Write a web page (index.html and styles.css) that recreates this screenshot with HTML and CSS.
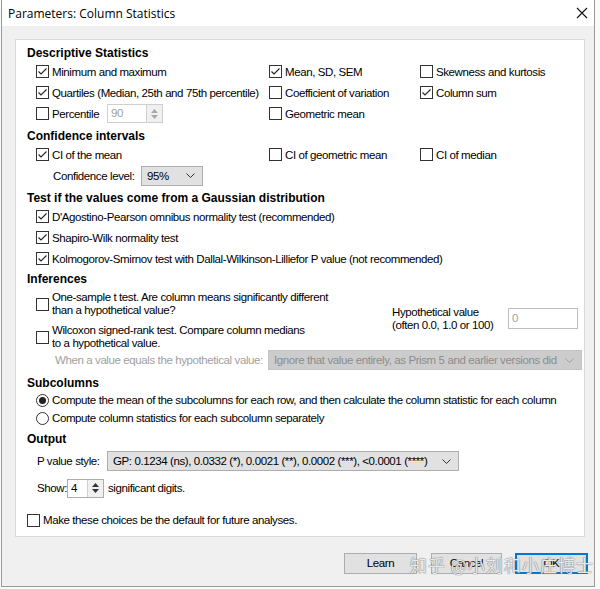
FILE: index.html
```html
<!DOCTYPE html>
<html lang="en">
<head>
    <meta charset="UTF-8">
    <title>Parameters: Column Statistics</title>
    <link rel="stylesheet" href="styles.css">
</head>
<body>
    <div class="win">
        <div class="titlebar">
            <span class="title">Parameters: Column Statistics</span>
            <svg class="close" width="12" height="12" viewBox="0 0 12 12"><path d="M1 1L11 11M11 1L1 11" stroke="#111" stroke-width="1.1"/></svg>
        </div>
        <div class="panel">
            <div class="sec">
                <div class="head">Descriptive Statistics</div>
                <div class="grid3">
                    <div class="opt"><span class="cb on"><svg viewBox="0 0 11 11"><path d="M1.5 5.5L4 8L9.5 2.5"/></svg></span>Minimum and maximum</div>
                    <div class="opt"><span class="cb on"><svg viewBox="0 0 11 11"><path d="M1.5 5.5L4 8L9.5 2.5"/></svg></span>Mean, SD, SEM</div>
                    <div class="opt"><span class="cb"></span>Skewness and kurtosis</div>
                    <div class="opt"><span class="cb on"><svg viewBox="0 0 11 11"><path d="M1.5 5.5L4 8L9.5 2.5"/></svg></span>Quartiles (Median, 25th and 75th percentile)</div>
                    <div class="opt"><span class="cb"></span>Coefficient of variation</div>
                    <div class="opt"><span class="cb on"><svg viewBox="0 0 11 11"><path d="M1.5 5.5L4 8L9.5 2.5"/></svg></span>Column sum</div>
                    <div class="opt"><span class="cb"></span><span class="pct-lbl">Percentile</span>
                        <span class="spin off pct"><span class="spin-val">90</span><span class="spin-btn"><svg width="7" height="4" viewBox="0 0 7 4"><path d="M0 4L3.5 0L7 4Z"/></svg><svg width="7" height="4" viewBox="0 0 7 4"><path d="M0 0L3.5 4L7 0Z"/></svg></span></span>
                    </div>
                    <div class="opt"><span class="cb"></span>Geometric mean</div>
                    <div></div>
                </div>
            </div>

            <div class="sec">
                <div class="head">Confidence intervals</div>
                <div class="grid3">
                    <div class="opt"><span class="cb on"><svg viewBox="0 0 11 11"><path d="M1.5 5.5L4 8L9.5 2.5"/></svg></span>CI of the mean</div>
                    <div class="opt"><span class="cb"></span>CI of geometric mean</div>
                    <div class="opt"><span class="cb"></span>CI of median</div>
                </div>
                <div class="row conf">
                    <span class="lbl">Confidence level:</span>
                    <span class="select conf-sel">95%<svg class="chev" width="9" height="5" viewBox="0 0 9 5"><path d="M0.5 0.5L4.5 4.5L8.5 0.5"/></svg></span>
                </div>
            </div>

            <div class="sec">
                <div class="head">Test if the values come from a Gaussian distribution</div>
                <div class="opt row"><span class="cb on"><svg viewBox="0 0 11 11"><path d="M1.5 5.5L4 8L9.5 2.5"/></svg></span>D'Agostino-Pearson omnibus normality test (recommended)</div>
                <div class="opt row"><span class="cb on"><svg viewBox="0 0 11 11"><path d="M1.5 5.5L4 8L9.5 2.5"/></svg></span>Shapiro-Wilk normality test</div>
                <div class="opt row"><span class="cb on"><svg viewBox="0 0 11 11"><path d="M1.5 5.5L4 8L9.5 2.5"/></svg></span>Kolmogorov-Smirnov test with Dallal-Wilkinson-Lilliefor P value (not recommended)</div>
            </div>

            <div class="sec inf-sec">
                <div class="head">Inferences</div>
                <div class="inf">
                    <div class="inf-list">
                        <div class="opt item first"><span class="cb"></span><span class="two">One-sample t test. Are column means significantly different<br>than a hypothetical value?</span></div>
                        <div class="opt item"><span class="cb"></span><span class="two">Wilcoxon signed-rank test. Compare column medians<br>to a hypothetical value.</span></div>
                    </div>
                    <div class="hyp">
                        <span class="two">Hypothetical value<br>(often 0.0, 1.0 or 100)</span>
                        <span class="field">0</span>
                    </div>
                </div>
                <div class="row when">
                    <span class="lbl dim">When a value equals the hypothetical value:</span>
                    <span class="select off when-sel">Ignore that value entirely, as Prism 5 and earlier versions did<svg class="chev" width="9" height="5" viewBox="0 0 9 5"><path d="M0.5 0.5L4.5 4.5L8.5 0.5"/></svg></span>
                </div>
            </div>

            <div class="sec sub-sec">
                <div class="head">Subcolumns</div>
                <div class="opt radio-row"><span class="rb on"></span>Compute the mean of the subcolumns for each row, and then calculate the column statistic for each column</div>
                <div class="opt radio-row"><span class="rb"></span>Compute column statistics for each subcolumn separately</div>
            </div>

            <div class="sec">
                <div class="head">Output</div>
                <div class="row pval">
                    <span class="lbl">P value style:</span>
                    <span class="select pval-sel">GP: 0.1234 (ns), 0.0332 (*), 0.0021 (**), 0.0002 (***), &lt;0.0001 (****)<svg class="chev" width="9" height="5" viewBox="0 0 9 5"><path d="M0.5 0.5L4.5 4.5L8.5 0.5"/></svg></span>
                </div>
                <div class="row show">
                    <span class="lbl">Show:</span>
                    <span class="spin digits"><span class="spin-val">4</span><span class="spin-btn"><svg width="7" height="4" viewBox="0 0 7 4"><path d="M0 4L3.5 0L7 4Z"/></svg><svg width="7" height="4" viewBox="0 0 7 4"><path d="M0 0L3.5 4L7 0Z"/></svg></span></span>
                    <span class="tail">significant digits.</span>
                </div>
            </div>

            <div class="opt make"><span class="cb"></span>Make these choices be the default for future analyses.</div>
        </div>

        <div class="buttons">
            <span class="btn learn">Learn</span>
            <span class="btn cancel">Cancel</span>
            <span class="btn ok">OK</span>
        </div>
        <div class="mark">知乎 @小刘和小庄博士</div>
    </div>
</body>
</html>
```

FILE: styles.css
```css
*{
    margin: 0;
    padding: 0;
    box-sizing: border-box;
}
body{
    background: #fafafa;
    font-family: "Liberation Sans", Arial, sans-serif;
    font-size: 11.5px;
    letter-spacing: -0.4px;
    color: #000;
}
.win{
    position: relative;
    width: 594px;
    height: 587px;
    margin-left: 1px;
    background: #f0f0f0;
    border: 1px solid #9a9a9a;
    border-top: none;
}
.titlebar{
    height: 26px;
    background: #fff;
    display: flex;
    align-items: center;
    justify-content: space-between;
    padding: 0 6px 0 6px;
}
.title{
    font-family: "Open Sans", "Liberation Sans", sans-serif;
    font-size: 12px;
    letter-spacing: 0;
    color: #000;
}
.panel{
    margin: 13px 9px 0 13px;
    height: 498px;
    background: #fff;
    border: 1px solid #dadada;
    padding: 5px 0 0 11px;
}
.sec{
    margin-top: 4px;
}
.sec:first-child{
    margin-top: 0;
}
.head{
    height: 16px;
    line-height: 16px;
    font-weight: bold;
    font-size: 12px;
    letter-spacing: 0;
}
.grid3{
    display: grid;
    grid-template-columns: 233px 151px 1fr;
    padding-left: 9px;
}
.opt{
    display: flex;
    align-items: center;
    height: 21px;
    white-space: nowrap;
}
.row{
    display: flex;
    align-items: center;
    height: 21px;
    padding-left: 9px;
    white-space: nowrap;
}
.cb{
    width: 13px;
    height: 13px;
    border: 1px solid #333;
    background: #fff;
    margin-right: 3px;
    flex: none;
    display: flex;
}
.cb svg{
    width: 11px;
    height: 11px;
    fill: none;
    stroke: #222;
    stroke-width: 1.1;
}
.rb{
    width: 13px;
    height: 13px;
    border: 1px solid #333;
    border-radius: 50%;
    background: #fff;
    margin-right: 3px;
    flex: none;
    display: flex;
    align-items: center;
    justify-content: center;
}
.rb.on::after{
    content: "";
    width: 7px;
    height: 7px;
    border-radius: 50%;
    background: #222;
}
.pct-lbl{
    width: 55px;
}
.spin{
    display: flex;
    align-items: stretch;
    border: 1px solid #adadad;
    background: #fff;
    height: 19px;
}
.spin-val{
    flex: 1;
    padding-left: 3px;
    line-height: 17px;
}
.spin-btn{
    width: 16px;
    display: flex;
    flex-direction: column;
    justify-content: center;
    align-items: center;
    gap: 2px;
    background: #f0f0f0;
    border-left: 1px solid #d0d0d0;
}
.spin-btn svg{
    fill: #333;
}
.spin.off{
    border-color: #cfcfcf;
    color: #a0a0a0;
}
.spin.off .spin-btn svg{
    fill: #a8a8a8;
}
.pct{
    width: 56px;
}
.digits{
    width: 37px;
}
.tail{
    margin-left: 4px;
}
.select{
    display: flex;
    align-items: center;
    justify-content: space-between;
    height: 20px;
    padding: 0 7px 0 5px;
    background: #e1e1e1;
    border: 1px solid #adadad;
    white-space: nowrap;
}
.chev{
    fill: none;
    stroke: #333;
    stroke-width: 1;
}
.conf{
    padding-left: 26px;
}
.conf .lbl{
    width: 88px;
}
.conf-sel{
    width: 62px;
}
.inf-sec{
    margin-top: 2px;
}
.inf{
    display: flex;
    align-items: center;
    padding-left: 9px;
}
.inf-list{
    width: 356px;
}
.item{
    height: auto;
    padding: 3px 0 0;
}
.item.first{
    padding: 4px 0 4px;
}
.two{
    line-height: 13px;
}
.hyp{
    display: flex;
    align-items: center;
}
.hyp .two{
    width: 116px;
}
.field{
    width: 70px;
    height: 21px;
    border: 1px solid #bdbdbd;
    color: #a0a0a0;
    padding: 3px 0 0 3px;
}
.when{
    height: 20px;
    padding-left: 28px;
}
.when .lbl{
    width: 213px;
}
.dim{
    color: #a0a0a0;
}
.when-sel{
    width: 314px;
    background: #cccccc;
    border-color: #c4c4c4;
    color: #8c8c8c;
}
.when-sel .chev{
    stroke: #a0a0a0;
}
.sub-sec{
    margin-top: 5px;
}
.radio-row{
    height: 18px;
    padding-left: 9px;
}
.pval{
    height: 22px;
    margin-top: 3px;
    padding-left: 10px;
}
.pval .lbl{
    width: 70px;
}
.pval-sel{
    width: 352px;
}
.show{
    height: 22px;
    margin-top: 5px;
    padding-left: 10px;
}
.show .lbl{
    width: 30px;
}
.make{
    height: 18px;
    margin-top: 12px;
}
.buttons{
    display: flex;
    justify-content: flex-end;
    padding: 16px 6px 0 0;
}
.btn{
    height: 21px;
    line-height: 19px;
    text-align: center;
    background: #e1e1e1;
    border: 1px solid #adadad;
}
.learn{
    width: 73px;
}
.cancel{
    width: 71px;
    margin-left: 14px;
}
.ok{
    width: 73px;
    margin-left: 13px;
    border: 2px solid #0078d7;
    line-height: 17px;
}
.mark{
    position: absolute;
    left: 408px;
    top: 552px;
    font-family: "Noto Sans CJK SC", sans-serif;
    font-size: 17px;
    letter-spacing: 1px;
    color: rgba(255, 255, 255, 0.85);
    text-shadow: 0 0 1px #777, 0 0 1px #777;
    pointer-events: none;
}
```
